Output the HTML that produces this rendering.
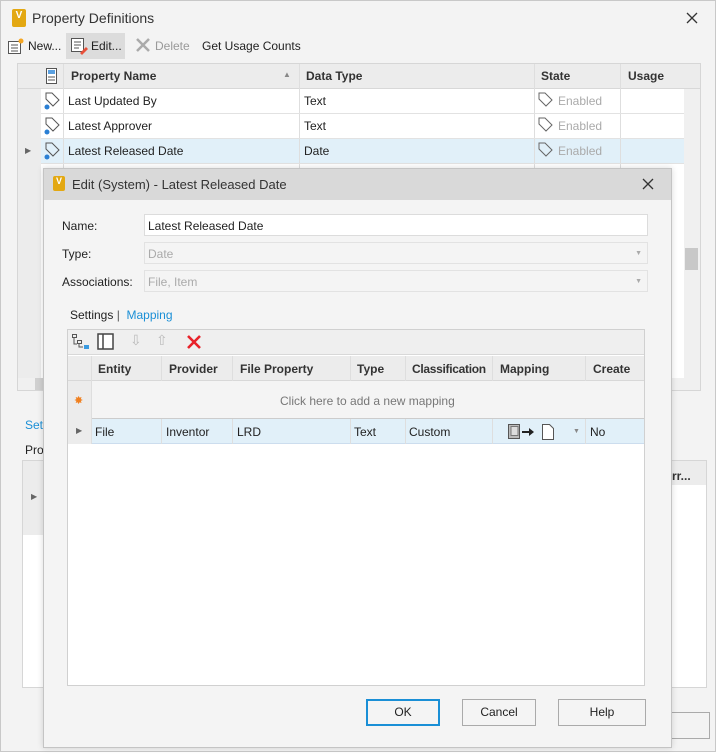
<!DOCTYPE html>
<html><head><style>
*{box-sizing:border-box;margin:0;padding:0}
body{width:718px;height:754px;background:#fff;font-family:"Liberation Sans",sans-serif;font-size:12px;color:#222;position:relative;overflow:hidden}
.a{position:absolute}
.hdr{font-weight:bold;color:#333}
.vl{position:absolute;width:1px;background:#dedede}
.hl{position:absolute;height:1px;background:#e2e2e2}
</style></head><body>
<div class="a" style="left:0;top:0;width:716px;height:752px;background:#f3f3f3;border:1px solid #c8c8c8"></div>
<div class="a" style="left:12px;top:9px;width:14px;height:18px;background:#e3a812;border-radius:2px;color:#fff;font-weight:bold;font-size:10px;text-align:center;line-height:13px">V</div>
<div class="a" style="left:32px;top:10px;font-size:14px;color:#333">Property Definitions</div>
<svg class="a" style="left:686px;top:12px" width="12" height="12"><path d="M1 1L11 11M11 1L1 11" stroke="#333" stroke-width="1.3"/></svg>
<div class="a" style="left:66px;top:33px;width:59px;height:26px;background:#dcdcdc"></div>
<svg class="a" style="left:7px;top:37px" width="18" height="18"><rect x="1.5" y="4.5" width="12" height="12" fill="#fff" stroke="#555"/><path d="M4 8h7M4 11h7M4 14h7" stroke="#555"/><circle cx="14" cy="4" r="2.5" fill="#f5a623"/></svg>
<div class="a" style="left:28px;top:39px">New...</div>
<svg class="a" style="left:70px;top:37px" width="18" height="18"><rect x="1.5" y="1.5" width="12" height="13" fill="#fff" stroke="#555"/><path d="M4 5h7M4 8h7M4 11h5" stroke="#555"/><path d="M10 16l6-6 2 2-6 6z" fill="#e8503a"/></svg>
<div class="a" style="left:91px;top:39px">Edit...</div>
<svg class="a" style="left:136px;top:38px" width="14" height="14"><path d="M1 1L13 13M13 1L1 13" stroke="#aaa" stroke-width="2.5"/></svg>
<div class="a" style="left:155px;top:39px;color:#999">Delete</div>
<div class="a" style="left:202px;top:39px">Get Usage Counts</div>
<div class="a" style="left:17px;top:63px;width:684px;height:328px;background:#fff;border:1px solid #d6d6d6"></div>
<div class="a" style="left:18px;top:64px;width:682px;height:25px;background:#ececec;border-bottom:1px solid #d8d8d8"></div>
<div class="a" style="left:18px;top:89px;width:23px;height:290px;background:#ececec"></div>
<div class="a" style="left:18px;top:378px;width:682px;height:12px;background:#f0f0f0"></div>
<div class="a" style="left:684px;top:89px;width:16px;height:290px;background:#f0f0f0"></div>
<div class="a" style="left:685px;top:248px;width:13px;height:22px;background:#c8c8c8"></div>
<div class="a" style="left:35px;top:378px;width:8px;height:12px;background:#d0d0d0"></div>
<div class="a" style="left:41px;top:139px;width:643px;height:25px;background:#e1f0f9"></div>
<div class="vl" style="left:63px;top:64px;height:314px"></div>
<div class="vl" style="left:299px;top:64px;height:314px"></div>
<div class="vl" style="left:534px;top:64px;height:314px"></div>
<div class="vl" style="left:620px;top:64px;height:314px"></div>
<div class="hl" style="left:41px;top:113px;width:643px"></div>
<div class="hl" style="left:41px;top:138px;width:643px"></div>
<div class="hl" style="left:41px;top:163px;width:643px"></div>
<svg class="a" style="left:45px;top:67px" width="14" height="18"><rect x="1.5" y="1.5" width="10" height="15" fill="#fff" stroke="#555"/><rect x="3" y="3" width="7" height="4" fill="#5aa0e0"/><path d="M3 10h7M3 13h7" stroke="#555"/></svg>
<div class="a hdr" style="left:71px;top:69px">Property Name</div>
<div class="a" style="left:283px;top:70px;font-size:8px;color:#888">▲</div>
<div class="a hdr" style="left:306px;top:69px">Data Type</div>
<div class="a hdr" style="left:541px;top:69px">State</div>
<div class="a hdr" style="left:628px;top:69px">Usage</div>
<div class="a" style="left:25px;top:146px;font-size:8px;color:#666">▶</div>
<svg class="a" style="left:43px;top:91px" width="18" height="70"><g fill="none" stroke="#555"><path d="M3 2h6l7 7-6 6-7-7z"/><path d="M3 27h6l7 7-6 6-7-7z"/><path d="M3 52h6l7 7-6 6-7-7z"/></g><g fill="#2a7fd4"><circle cx="4" cy="16" r="2.5"/><circle cx="4" cy="41" r="2.5"/><circle cx="4" cy="66" r="2.5"/></g></svg>
<div class="a" style="left:68px;top:94px">Last Updated By</div>
<div class="a" style="left:68px;top:119px">Latest Approver</div>
<div class="a" style="left:68px;top:144px">Latest Released Date</div>
<div class="a" style="left:304px;top:94px">Text</div>
<div class="a" style="left:304px;top:119px">Text</div>
<div class="a" style="left:304px;top:144px">Date</div>
<svg class="a" style="left:538px;top:92px" width="16" height="66"><g fill="none" stroke="#666"><path d="M1 1h6l7 7-6 6-7-7z"/><path d="M1 26h6l7 7-6 6-7-7z"/><path d="M1 51h6l7 7-6 6-7-7z"/></g></svg>
<div class="a" style="left:558px;top:94px;color:#aaa">Enabled</div>
<div class="a" style="left:558px;top:119px;color:#aaa">Enabled</div>
<div class="a" style="left:558px;top:144px;color:#aaa">Enabled</div>
<div class="a" style="left:25px;top:418px;color:#1a8fd6">Set</div>
<div class="a" style="left:25px;top:443px">Pro</div>
<div class="a" style="left:22px;top:460px;width:685px;height:228px;background:#fff;border:1px solid #d6d6d6"></div>
<div class="a" style="left:23px;top:461px;width:683px;height:24px;background:#ececec"></div>
<div class="a" style="left:23px;top:485px;width:20px;height:50px;background:#ececec"></div>
<div class="a" style="left:31px;top:492px;font-size:8px;color:#666">▶</div>
<div class="a hdr" style="left:672px;top:469px">rr...</div>
<div class="a" style="left:660px;top:712px;width:50px;height:27px;border:1px solid #aaa;background:#f3f3f3"></div>
<div class="a" style="left:43px;top:168px;width:629px;height:580px;background:#f4f4f4;border:1px solid #c4c4c4;box-shadow:0 0 6px rgba(0,0,0,.15)"></div>
<div class="a" style="left:44px;top:169px;width:627px;height:31px;background:#d9d9d9"></div>
<div class="a" style="left:53px;top:176px;width:12px;height:15px;background:#e3a812;border-radius:2px;color:#fff;font-weight:bold;font-size:9px;text-align:center;line-height:11px">V</div>
<div class="a" style="left:72px;top:177px;font-size:13px;color:#333">Edit (System) - Latest Released Date</div>
<svg class="a" style="left:642px;top:178px" width="12" height="12"><path d="M1 1L11 11M11 1L1 11" stroke="#333" stroke-width="1.3"/></svg>
<div class="a" style="left:62px;top:219px">Name:</div>
<div class="a" style="left:62px;top:247px">Type:</div>
<div class="a" style="left:62px;top:275px">Associations:</div>
<div class="a" style="left:144px;top:214px;width:504px;height:22px;background:#fff;border:1px solid #dcdcdc;padding:4px 3px">Latest Released Date</div>
<div class="a" style="left:144px;top:242px;width:504px;height:22px;background:#f4f4f4;border:1px solid #e2e2e2;padding:4px 3px;color:#aaa">Date<span style="position:absolute;right:5px;font-size:7px;top:7px">▼</span></div>
<div class="a" style="left:144px;top:270px;width:504px;height:22px;background:#f4f4f4;border:1px solid #e2e2e2;padding:4px 3px;color:#aaa">File, Item<span style="position:absolute;right:5px;font-size:7px;top:7px">▼</span></div>
<div class="a" style="left:70px;top:308px">Settings <span style="color:#555">|</span> &nbsp;<span style="color:#1a8fd6">Mapping</span></div>
<div class="a" style="left:67px;top:329px;width:578px;height:357px;background:#fff;border:1px solid #d0d0d0"></div>
<div class="a" style="left:68px;top:330px;width:576px;height:25px;background:#efefef;border-bottom:1px solid #d8d8d8"></div>
<svg class="a" style="left:71px;top:333px" width="20" height="18"><g fill="none" stroke="#555"><rect x="1.5" y="1.5" width="4" height="3"/><rect x="6.5" y="7.5" width="4" height="3"/><path d="M3 5v6h3M8 11v3h4"/></g><rect x="13" y="12" width="5" height="4" fill="#3a9ae0"/></svg>
<svg class="a" style="left:97px;top:333px" width="18" height="18"><rect x="1" y="1" width="15" height="15" fill="#fff" stroke="#444" stroke-width="1.5"/><path d="M6 1v15" stroke="#444" stroke-width="1.5"/></svg>
<div class="a" style="left:130px;top:332px;font-size:14px;color:#bbb">⇩</div>
<div class="a" style="left:156px;top:332px;font-size:14px;color:#bbb">⇧</div>
<svg class="a" style="left:187px;top:335px" width="14" height="14"><path d="M1 1L13 13M13 1L1 13" stroke="#e8222a" stroke-width="2.6"/></svg>
<div class="a" style="left:68px;top:356px;width:576px;height:25px;background:#ececec;border-bottom:1px solid #d8d8d8"></div>
<div class="a" style="left:68px;top:381px;width:576px;height:38px;background:#f4f4f4;border-bottom:1px solid #ccc"></div>
<div class="a" style="left:68px;top:381px;width:23px;height:63px;background:#ececec"></div>
<div class="a" style="left:91px;top:419px;width:553px;height:25px;background:#e1f0f9;border-bottom:1px solid #cde"></div>
<div class="vl" style="left:91px;top:356px;height:88px"></div>
<div class="vl" style="left:161px;top:356px;height:25px"></div><div class="vl" style="left:161px;top:419px;height:25px"></div>
<div class="vl" style="left:232px;top:356px;height:25px"></div><div class="vl" style="left:232px;top:419px;height:25px"></div>
<div class="vl" style="left:350px;top:356px;height:25px"></div><div class="vl" style="left:350px;top:419px;height:25px"></div>
<div class="vl" style="left:405px;top:356px;height:25px"></div><div class="vl" style="left:405px;top:419px;height:25px"></div>
<div class="vl" style="left:492px;top:356px;height:25px"></div><div class="vl" style="left:492px;top:419px;height:25px"></div>
<div class="vl" style="left:585px;top:356px;height:25px"></div><div class="vl" style="left:585px;top:419px;height:25px"></div>
<div class="a hdr" style="left:98px;top:362px">Entity</div>
<div class="a hdr" style="left:169px;top:362px">Provider</div>
<div class="a hdr" style="left:240px;top:362px">File Property</div>
<div class="a hdr" style="left:357px;top:362px">Type</div>
<div class="a hdr" style="left:412px;top:362px;letter-spacing:-0.3px">Classification</div>
<div class="a hdr" style="left:500px;top:362px">Mapping</div>
<div class="a hdr" style="left:593px;top:362px">Create</div>
<div class="a" style="left:74px;top:394px;color:#f08020;font-size:11px">✸</div>
<div class="a" style="left:280px;top:394px;color:#777">Click here to add a new mapping</div>
<div class="a" style="left:76px;top:426px;font-size:8px;color:#666">▶</div>
<div class="a" style="left:95px;top:425px">File</div>
<div class="a" style="left:166px;top:425px">Inventor</div>
<div class="a" style="left:237px;top:425px">LRD</div>
<div class="a" style="left:354px;top:425px">Text</div>
<div class="a" style="left:409px;top:425px">Custom</div>
<svg class="a" style="left:507px;top:423px" width="50" height="18"><rect x="1.5" y="1.5" width="11" height="14" fill="#bbb" stroke="#555"/><rect x="4" y="3.5" width="7" height="9" fill="#ddd" stroke="#777"/><path d="M15 9h9" stroke="#222" stroke-width="2"/><path d="M22 5l5 4-5 4z" fill="#222"/><path d="M35.5 1.5h7l4 4v11h-11z" fill="#fff" stroke="#555"/></svg>
<div class="a" style="left:573px;top:428px;font-size:7px;color:#888">▼</div>
<div class="a" style="left:590px;top:425px">No</div>
<div class="a" style="left:366px;top:699px;width:74px;height:27px;border:2px solid #1a8fd6;background:#f4f4f4;text-align:center;line-height:23px">OK</div>
<div class="a" style="left:462px;top:699px;width:74px;height:27px;border:1px solid #aaa;background:#f4f4f4;text-align:center;line-height:25px">Cancel</div>
<div class="a" style="left:558px;top:699px;width:88px;height:27px;border:1px solid #aaa;background:#f4f4f4;text-align:center;line-height:25px">Help</div>
</body></html>
